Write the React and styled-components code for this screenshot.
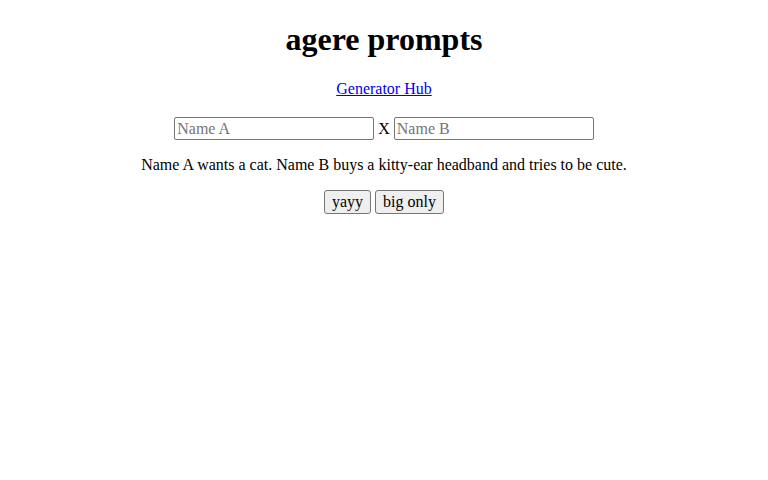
import React, { useState } from "react";
import styled, { createGlobalStyle } from "styled-components";

const GlobalStyle = createGlobalStyle`
  body {
    margin: 0;
    padding: 0 8px;
    font-family: "Liberation Serif", "Times New Roman", serif;
    font-size: 16px;
    color: #000;
    background: #fff;
  }
`;

const Page = styled.div`
  text-align: center;
`;

const Title = styled.h1`
  font-size: 32px;
  font-weight: bold;
  margin: 21.44px 0;
`;

const HubLink = styled.a`
  color: #0000ee;
  text-decoration: underline;
`;

const NameRow = styled.p`
  margin: 19px 0 16px;
`;

const NameInput = styled.input`
  font-family: inherit;
  font-size: 16px;
  width: 200px;
  box-sizing: border-box;
  padding: 2px 2px 1px;
  border: 1px solid #767676;
  border-radius: 2px;

  &::placeholder {
    color: #757575;
  }
`;

const Prompt = styled.p`
  margin: 16px 0;
`;

const Actions = styled.p`
  margin: 16px 0;
`;

const ActionButton = styled.button`
  font-family: inherit;
  font-size: 16px;
  padding: 2px 7px;
  margin: 0 2px;
  background: #efefef;
  border: 1px solid #767676;
  border-radius: 3px;
  color: #000;
`;

export default function App() {
  const [nameA, setNameA] = useState("");
  const [nameB, setNameB] = useState("");
  const a = nameA || "Name A";
  const b = nameB || "Name B";

  return (
    <Page>
      <GlobalStyle />
      <Title>agere prompts</Title>
      <HubLink href="#">Generator Hub</HubLink>
      <NameRow>
        <NameInput
          placeholder="Name A"
          value={nameA}
          onChange={(e) => setNameA(e.target.value)}
        />{" "}
        X{" "}
        <NameInput
          placeholder="Name B"
          value={nameB}
          onChange={(e) => setNameB(e.target.value)}
        />
      </NameRow>
      <Prompt>
        {a} wants a cat. {b} buys a kitty-ear headband and tries to be cute.
      </Prompt>
      <Actions>
        <ActionButton>yayy</ActionButton>
        <ActionButton>big only</ActionButton>
      </Actions>
    </Page>
  );
}
